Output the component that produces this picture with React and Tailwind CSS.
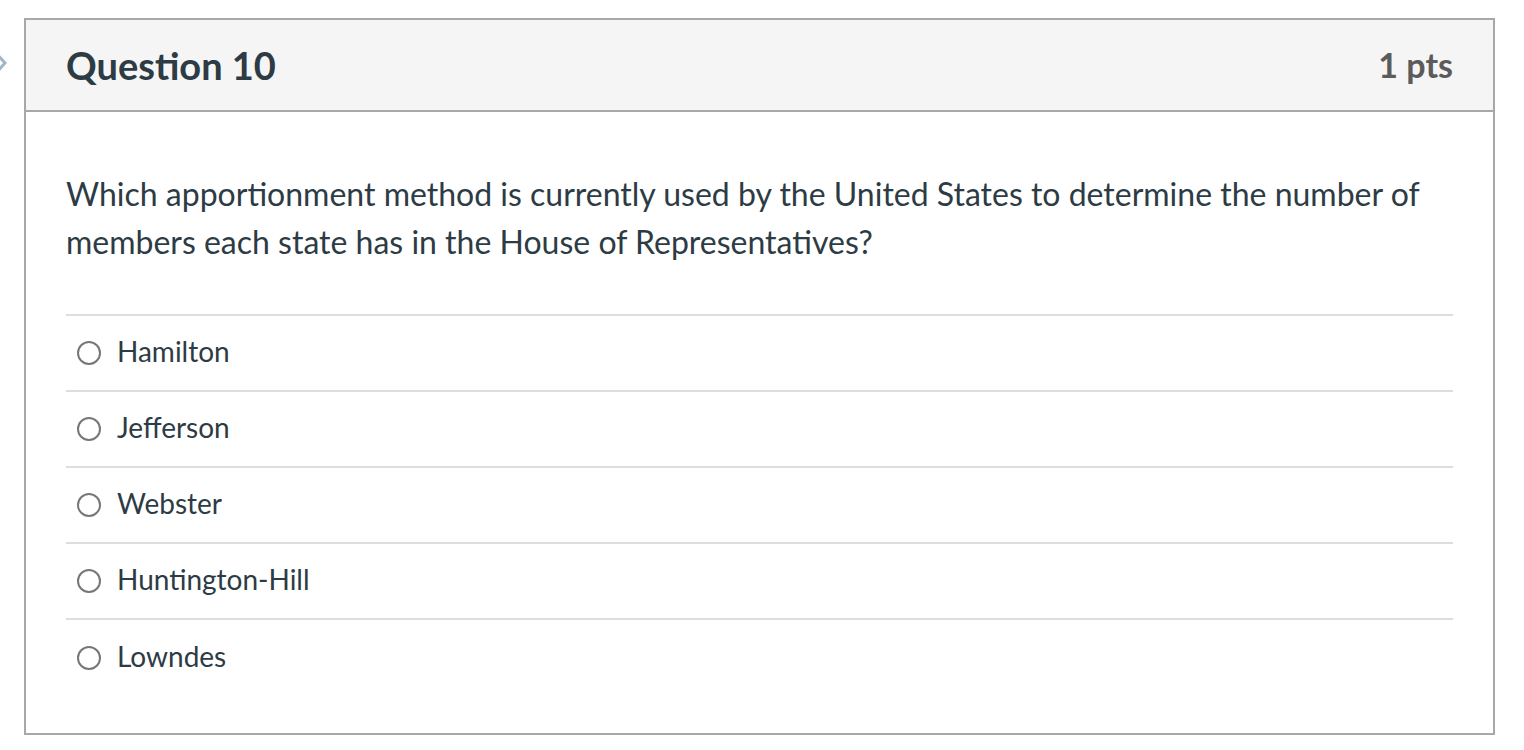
import React from "react";

const answers = ["Hamilton", "Jefferson", "Webster", "Huntington-Hill", "Lowndes"];

function Radio() {
    return (
        <span className="inline-block w-[24px] h-[24px] rounded-full border-2 border-[#777777] bg-white shrink-0" />
    );
}

export default function App() {
    return (
        <div className="min-h-screen bg-white pt-[18px] pl-[24px] font-['Lato','Liberation_Sans',sans-serif] text-[#2d3b45] relative">
            <svg className="absolute left-[-8px] top-[50px]" width="16" height="26" viewBox="0 0 16 26">
                <path d="M3 2 L13 13 L3 24" fill="none" stroke="#9fb6c8" strokeWidth="3" />
            </svg>

            <div className="w-[1471px] h-[717px] border-2 border-[#a8a8a8] flex flex-col">
                <div className="h-[92px] bg-[#f5f5f5] border-b-2 border-[#a8a8a8] flex items-center justify-between px-[40px]">
                    <h2 className="text-[38px] font-bold leading-none">Question 10</h2>
                    <span className="text-[34px] font-bold text-[#5b5b5b] leading-none">1 pts</span>
                </div>

                <div className="px-[40px] pt-[58px]">
                    <p className="text-[32px] leading-[48px]">
                        Which apportionment method is currently used by the United States to determine the number of members each state has in the House of Representatives?
                    </p>

                    <div className="mt-[48px] border-t-2 border-[#dddddd]">
                        {answers.map((a, i) => (
                            <div
                                key={a}
                                className={
                                    "h-[76px] flex items-center gap-[16px] pl-[11px] " +
                                    (i < answers.length - 1 ? "border-b-2 border-[#dddddd]" : "")
                                }
                            >
                                <Radio />
                                <span className="text-[28px] mb-[5px]">{a}</span>
                            </div>
                        ))}
                    </div>
                </div>
            </div>
        </div>
    );
}
